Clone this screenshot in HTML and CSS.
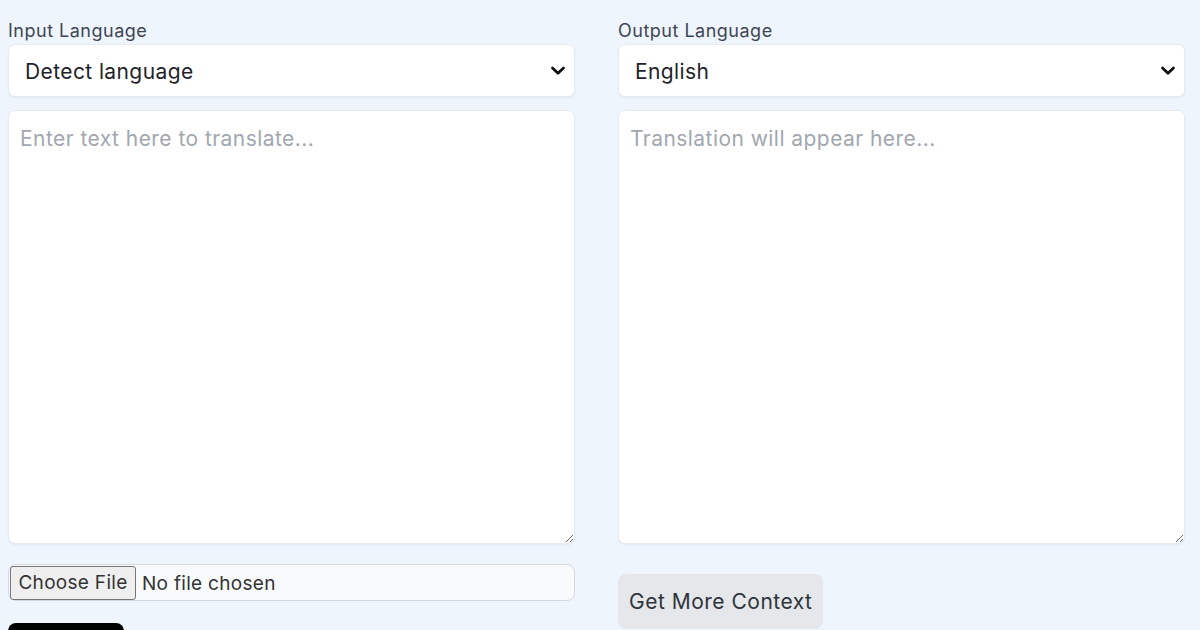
FILE: index.html
```html
<!DOCTYPE html>
<html lang="en">
<head>
    <meta charset="UTF-8">
    <title>Translator</title>
    <link rel="stylesheet" href="styles.css">
</head>
<body>
    <div class="panes">
        <div class="pane">
            <label class="lang-label" for="inputLang">Input Language</label>
            <select id="inputLang" class="lang-select">
                <option>Detect language</option>
                <option>English</option>
                <option>Spanish</option>
            </select>
            <textarea class="text-box" placeholder="Enter text here to translate..."></textarea>
            <div class="file-row">
                <input type="file" class="file-input">
            </div>
            <button class="translate-btn" aria-label="Translate"></button>
        </div>
        <div class="pane">
            <label class="lang-label" for="outputLang">Output Language</label>
            <select id="outputLang" class="lang-select">
                <option>English</option>
                <option>Spanish</option>
                <option>French</option>
            </select>
            <textarea class="text-box" placeholder="Translation will appear here..." readonly></textarea>
            <div class="context-row">
                <button class="context-btn">Get More Context</button>
            </div>
        </div>
    </div>
</body>
</html>
```

FILE: styles.css
```css
html, body {
    margin: 0;
    height: 100%;
    overflow: hidden;
}
body {
    background: #eef5fd;
    font-family: Inter, "Liberation Sans", sans-serif;
    color: #1f2937;
}
.panes {
    display: grid;
    grid-template-columns: 567px 567px;
    column-gap: 43px;
    padding: 20px 15px 0 8px;
}
.pane {
    display: flex;
    flex-direction: column;
}
.lang-label {
    font-size: 18px;
    letter-spacing: 0.5px;
    color: #3f4653;
    line-height: 21px;
    margin-bottom: 3px;
}
.lang-select {
    -webkit-appearance: none;
    appearance: none;
    height: 53px;
    border: 1px solid #e6ebf1;
    border-radius: 7px;
    background: #fff url("data:image/svg+xml;utf8,<svg xmlns='http://www.w3.org/2000/svg' width='16' height='11' viewBox='0 0 16 11'><path d='M2.5 3l5.5 5.2 5.5-5.2' fill='none' stroke='%23111' stroke-width='2.8' stroke-linecap='round' stroke-linejoin='round'/></svg>") no-repeat right 8px center;
    box-shadow: 0 1px 2px rgba(15, 23, 42, 0.06);
    font-family: Inter, "Liberation Sans", sans-serif;
    font-size: 21px;
    letter-spacing: 0.4px;
    color: #1f2329;
    padding: 1px 16px 0;
    margin: 0;
}
.text-box {
    margin-top: 13px;
    height: 434px;
    resize: vertical;
    border: 1px solid #e6ebf1;
    border-radius: 7px;
    background: #fff;
    box-shadow: 0 1px 2px rgba(15, 23, 42, 0.05);
    font-family: Inter, "Liberation Sans", sans-serif;
    font-size: 21px;
    letter-spacing: 0.45px;
    padding: 15px 11px;
    box-sizing: border-box;
    color: #1f2937;
}
.text-box::placeholder {
    color: #a2a7af;
}
.file-row {
    margin-top: 20px;
    height: 37px;
    border: 1px solid #d5d9de;
    border-radius: 8px;
    background: #f8fafc;
    box-sizing: border-box;
    display: flex;
    align-items: center;
    padding-left: 1px;
}
.file-input {
    font-family: Inter, "Liberation Sans", sans-serif;
    font-size: 19px;
    letter-spacing: 0.3px;
    color: #333;
}
.file-input::file-selector-button {
    font-family: Inter, "Liberation Sans", sans-serif;
    font-size: 19px;
    letter-spacing: 0.3px;
    height: 34px;
    width: 126px;
    padding: 0;
    margin-right: 6px;
    border: 1px solid #767676;
    border-radius: 3px;
    background: #efefef;
    color: #333;
}
.translate-btn {
    margin-top: 22px;
    width: 116px;
    height: 44px;
    border: none;
    border-radius: 8px;
    background: #000;
}
.context-row {
    margin-top: 30px;
}
.context-btn {
    height: 55px;
    padding: 0 11px;
    border: none;
    border-radius: 8px;
    background: #e5e7eb;
    color: #2f343b;
    font-family: Inter, "Liberation Sans", sans-serif;
    font-size: 21px;
    letter-spacing: 0.5px;
}
```
